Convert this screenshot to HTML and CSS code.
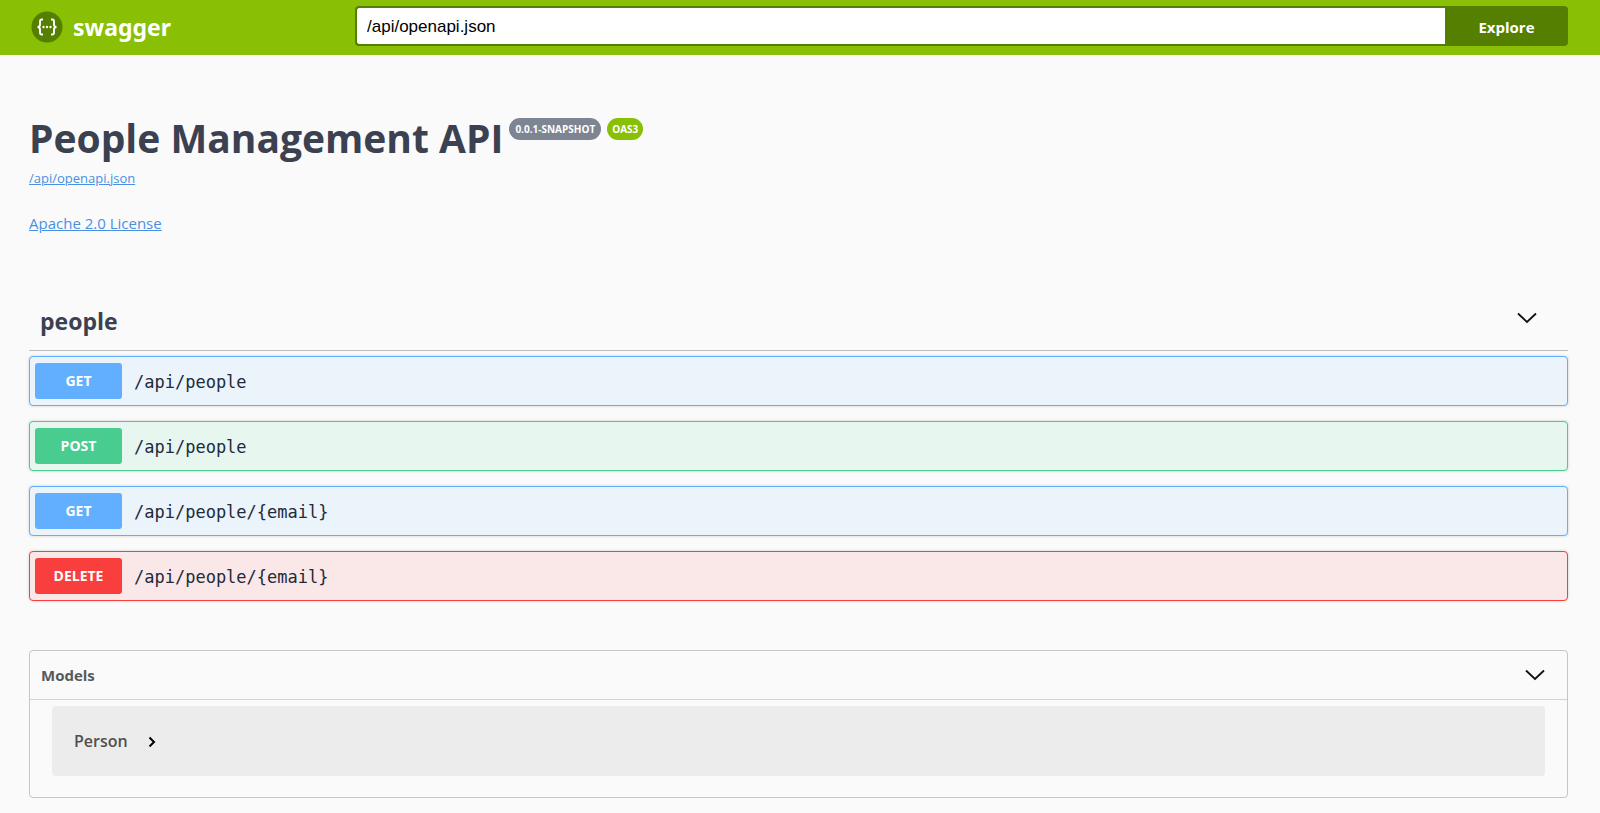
FILE: index.html
```html
<!DOCTYPE html>
<html lang="en">
<head>
<meta charset="utf-8">
<title>People Management API</title>
<link rel="stylesheet" href="styles.css">
</head>
<body>
<header class="topbar">
  <a class="brand" href="#">
    <svg class="brand-mark" viewBox="0 0 32 32" aria-hidden="true">
      <circle cx="16" cy="16" r="15.5" fill="#547f00"/>
      <g fill="none" stroke="#fff" stroke-width="1.9">
        <path d="M12 8.500h-1.200Q9 8.500 9 10.500v3Q9 16 6.500 16 9 16 9 18.500v3q0 2 1.800 2H12"/>
        <path d="M20 8.500h1.200q1.800 0 1.800 2v3q0 2.500 2.500 2.500-2.500 0-2.500 2.500v3q0 2-1.800 2H20"/>
      </g>
      <g fill="#fff"><circle cx="12.500" cy="16" r="1.200"/><circle cx="16" cy="16" r="1.200"/><circle cx="19.500" cy="16" r="1.200"/></g>
    </svg>
    <span class="brand-name">swagger</span>
  </a>
  <form class="search">
    <input class="search-input" type="text" value="/api/openapi.json" aria-label="API definition URL">
    <button class="search-button" type="button">Explore</button>
  </form>
</header>
<main class="content">
  <section class="info">
    <div class="heading">
      <h1 class="title">People Management API</h1>
      <span class="badge">0.0.1-SNAPSHOT</span>
      <span class="badge badge-oas">OAS3</span>
    </div>
    <a class="link definition" href="#">/api/openapi.json</a>
    <a class="link license" href="#">Apache 2.0 License</a>
  </section>
  <section class="tag">
    <div class="tag-header">
      <h2 class="tag-name">people</h2>
      <button class="toggle" type="button" aria-label="Collapse people">
        <svg class="chevron" viewBox="0 0 20 12" aria-hidden="true"><path d="M1 1.500 10 10l9-8.500"/></svg>
      </button>
    </div>
    <div class="operations">
      <button class="operation get" type="button"><span class="method">GET</span><span class="path">/api/people</span></button>
      <button class="operation post" type="button"><span class="method">POST</span><span class="path">/api/people</span></button>
      <button class="operation get" type="button"><span class="method">GET</span><span class="path">/api/people/{email}</span></button>
      <button class="operation delete" type="button"><span class="method">DELETE</span><span class="path">/api/people/{email}</span></button>
    </div>
  </section>
  <section class="models">
    <div class="models-header">
      <h2 class="models-title">Models</h2>
      <button class="toggle" type="button" aria-label="Collapse models">
        <svg class="chevron" viewBox="0 0 20 12" aria-hidden="true"><path d="M1 1.500 10 10l9-8.500"/></svg>
      </button>
    </div>
    <button class="model" type="button">
      <span>Person</span>
      <svg class="arrow" viewBox="0 0 8 12" aria-hidden="true"><path d="m1.500 2.500 4.500 4.500-4.500 4.500"/></svg>
    </button>
  </section>
</main>
</body>
</html>
```
FILE: styles.css
```css
*, *::before, *::after { box-sizing: border-box; }

body {
  margin: 0;
  background: #fafafa;
  color: #3b4151;
  font-family: "Open Sans", sans-serif;
}

button { font-family: inherit; cursor: pointer; }
h1, h2 { margin: 0; }

.topbar {
  display: flex;
  gap: 20px;
  padding: 6px 32px 9px 29px;
  background: #89bf04;
}

.brand {
  display: flex;
  flex: 0 0 306px;
  align-items: center;
  gap: 10px;
  padding: 2px 0 0 2px;
  color: #fff;
  text-decoration: none;
}
.brand-mark { width: 32px; height: 32px; }
.brand-name {
  font: 700 23px/38px "Noto Sans", sans-serif;
}

.search { display: flex; flex: 1; }
.search-input {
  flex: 1;
  min-width: 0;
  height: 40px;
  padding: 2px 10px 0;
  border: 2px solid #547f00;
  border-right: 0;
  border-radius: 4px 0 0 4px;
  background: #fff;
  color: #000;
  font: 17px "Liberation Sans", Arial, sans-serif;
}
.search-button {
  width: 123px;
  padding-top: 3px;
  border: 0;
  border-radius: 0 4px 4px 0;
  background: #547f00;
  color: #fff;
  font-size: 15px;
  font-weight: 700;
}

.content { padding: 0 32px 15px 29px; }

.info {
  display: flex;
  flex-direction: column;
  align-items: flex-start;
  padding: 55px 0 50px;
}
.heading { display: flex; align-items: flex-start; gap: 6px; }
.title { font-size: 39px; line-height: 56px; }
.badge {
  margin-top: 8px;
  padding: 0 6px;
  border-radius: 11px;
  background: #7d8492;
  color: #fff;
  font-size: 10px;
  font-weight: 700;
  line-height: 22px;
}
.badge-oas { padding: 0 5px; background: #89bf04; }
.link { color: #4990e2; }
.definition { font-size: 13px; line-height: 24px; }
.license { margin-top: 20px; font-size: 15px; line-height: 26px; }

.tag-header {
  display: flex;
  align-items: flex-end;
  justify-content: space-between;
  height: 65px;
  padding: 0 31px 12px 11px;
  border-bottom: 1px solid #bdbfc4;
}
.tag-name { font-size: 23px; line-height: 34px; }
.toggle { display: flex; padding: 0; border: 0; background: none; }
.tag-header .toggle { padding-bottom: 14px; }
.chevron { width: 20px; height: 12px; fill: none; stroke: #111; stroke-width: 1.8; }

.operations {
  display: flex;
  flex-direction: column;
  gap: 15px;
  padding-top: 5px;
}
.operation {
  display: flex;
  align-items: center;
  gap: 12px;
  width: 100%;
  height: 50px;
  padding: 5px;
  border: 1px solid;
  border-radius: 4px;
  box-shadow: 0 0 3px #00000030;
}
.method {
  width: 87px;
  border-radius: 3px;
  color: #fff;
  font-size: 14px;
  font-weight: 700;
  line-height: 36px;
  text-align: center;
}
.path {
  padding-top: 2px;
  color: #222b3c;
  font: 17px "DejaVu Sans Mono", monospace;
}
.get { border-color: #61affe; background: #ebf3fb; }
.get .method { background: #61affe; }
.post { border-color: #49cc90; background: #e8f6f0; }
.post .method { background: #49cc90; }
.delete { border-color: #f93e3e; background: #fae7e7; }
.delete .method { background: #f93e3e; }

.models {
  margin-top: 49px;
  padding-bottom: 21px;
  border: 1px solid #c4c6ca;
  border-radius: 4px;
}
.models-header {
  display: flex;
  align-items: center;
  justify-content: space-between;
  height: 49px;
  padding: 0 22px 0 11px;
  border-bottom: 1px solid #d0d2d5;
}
.models-title { color: #58595c; font-size: 15px; }
.model {
  display: flex;
  align-items: center;
  gap: 20px;
  width: calc(100% - 44px);
  height: 70px;
  margin: 6px 22px 0;
  padding: 0 22px;
  border: 0;
  border-radius: 4px;
  background: #ececec;
  color: #505050;
  font-size: 16px;
  font-weight: 600;
}
.arrow { width: 8px; height: 12px; fill: none; stroke: #000; stroke-width: 2; }
```
